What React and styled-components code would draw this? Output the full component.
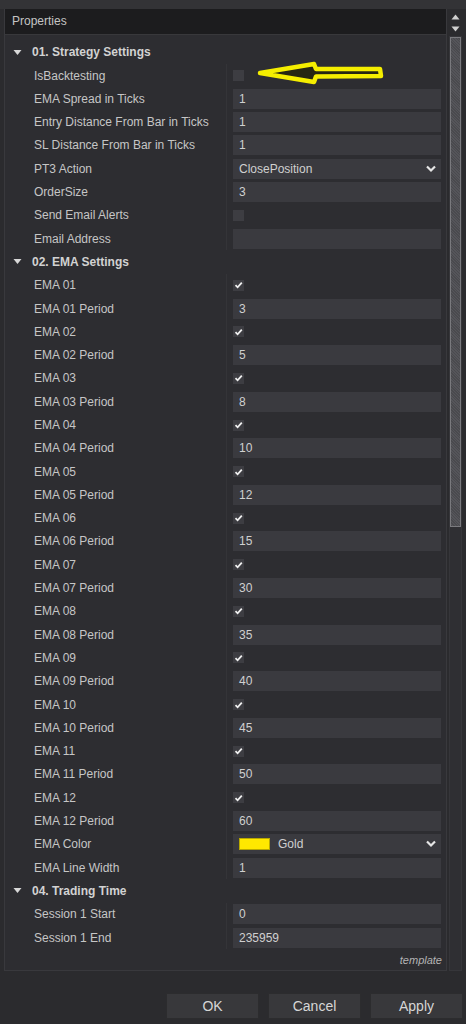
import React from "react";
import styled, { createGlobalStyle } from "styled-components";

const GlobalStyle = createGlobalStyle`
  html, body {
    margin: 0;
    padding: 0;
    background: #2b2b2e;
  }
  body {
    font-family: "Liberation Sans", Arial, sans-serif;
  }
`;

const strategy = [
  { label: "IsBacktesting", type: "check", checked: false },
  { label: "EMA Spread in Ticks", type: "text", value: "1" },
  { label: "Entry Distance From Bar in Ticks", type: "text", value: "1" },
  { label: "SL Distance From Bar in Ticks", type: "text", value: "1" },
  { label: "PT3 Action", type: "select", value: "ClosePosition" },
  { label: "OrderSize", type: "text", value: "3" },
  { label: "Send Email Alerts", type: "check", checked: false },
  { label: "Email Address", type: "text", value: "" },
];

const periods = [3, 5, 8, 10, 12, 15, 30, 35, 40, 45, 50, 60];
const ema = [];
periods.forEach((p, i) => {
  const n = String(i + 1).padStart(2, "0");
  ema.push({ label: `EMA ${n}`, type: "check", checked: true });
  ema.push({ label: `EMA ${n} Period`, type: "text", value: String(p) });
});
ema.push({ label: "EMA Color", type: "color", value: "Gold" });
ema.push({ label: "EMA Line Width", type: "text", value: "1" });

const trading = [
  { label: "Session 1 Start", type: "text", value: "0" },
  { label: "Session 1 End", type: "text", value: "235959" },
];

const sections = [
  { title: "01. Strategy Settings", rows: strategy },
  { title: "02. EMA Settings", rows: ema },
  { title: "04. Trading Time", rows: trading },
];

const Chevron = () => (
  <svg width="10" height="8" viewBox="0 0 10 8">
    <path d="M1 1.5 L5 5.5 L9 1.5" fill="none" stroke="#e6e6e6" strokeWidth="2.2" />
  </svg>
);

const Caret = () => (
  <svg width="9" height="7" viewBox="0 0 9 7">
    <path d="M0.5 1 L8.5 1 L4.5 6 Z" fill="#d8d8d8" />
  </svg>
);

const Value = ({ row }) => {
  if (row.type === "check") {
    return (
      <CheckBox>
        {row.checked && (
          <svg width="9" height="8" viewBox="0 0 9 8">
            <path d="M1.5 4.2 L3.6 6.3 L7.8 1.6" fill="none" stroke="#f0f0f0" strokeWidth="1.8" />
          </svg>
        )}
      </CheckBox>
    );
  }
  if (row.type === "select") {
    return (
      <Field>
        <span>{row.value}</span>
        <Chevron />
      </Field>
    );
  }
  if (row.type === "color") {
    return (
      <Field>
        <Swatch />
        <SwatchLabel>{row.value}</SwatchLabel>
        <Chevron />
      </Field>
    );
  }
  return (
    <Field>
      <span>{row.value}</span>
    </Field>
  );
};

export default function App() {
  return (
    <Window>
      <GlobalStyle />
      <TopStrip />
      <Main>
        <Panel>
          <Header>Properties</Header>
          <List>
            {sections.map((s) => (
              <React.Fragment key={s.title}>
                <SectionRow>
                  <Caret />
                  <SectionTitle>{s.title}</SectionTitle>
                </SectionRow>
                {s.rows.map((r) => (
                  <Row key={r.label}>
                    <Label>{r.label}</Label>
                    <Cell>
                      <Value row={r} />
                    </Cell>
                  </Row>
                ))}
              </React.Fragment>
            ))}
            <Annotation width="132" height="26" viewBox="0 0 132 26">
              <path
                d="M4 12 L58 3 L60 8 L124 8 L125 15 L60 15.5 L58 21 Z"
                fill="#262612"
                stroke="#f5ee00"
                strokeWidth="4.5"
                strokeLinejoin="round"
              />
            </Annotation>
          </List>
          <TemplateNote>template</TemplateNote>
        </Panel>
        <ScrollColumn>
          <ArrowBtn>
            <svg width="9" height="6" viewBox="0 0 9 6">
              <path d="M0.5 5.5 L4.5 0.5 L8.5 5.5 Z" fill="#d0d0d0" />
            </svg>
          </ArrowBtn>
          <ArrowBtn>
            <svg width="9" height="6" viewBox="0 0 9 6">
              <path d="M0.5 0.5 L8.5 0.5 L4.5 5.5 Z" fill="#d0d0d0" />
            </svg>
          </ArrowBtn>
          <Track>
            <Thumb />
          </Track>
        </ScrollColumn>
      </Main>
      <ButtonBar>
        <Button>OK</Button>
        <Button>Cancel</Button>
        <Button>Apply</Button>
      </ButtonBar>
    </Window>
  );
}

const Window = styled.div`
  width: 466px;
  height: 1024px;
  background: #2b2b2e;
  display: flex;
  flex-direction: column;
  overflow: hidden;
`;

const TopStrip = styled.div`
  height: 9px;
  background: #333336;
`;

const Main = styled.div`
  display: flex;
  padding-left: 4px;
  gap: 1px;
`;

const Panel = styled.div`
  width: 443px;
  height: 962px;
  border: 1px solid #39393d;
  border-top: none;
  background: #2d2d31;
  display: flex;
  flex-direction: column;
  box-sizing: border-box;
`;

const Header = styled.div`
  height: 26px;
  display: flex;
  align-items: center;
  padding-left: 7px;
  background: #1c1c1e;
  border-bottom: 1px solid #38383b;
  color: #c4c4c4;
  font-size: 12px;
`;

const List = styled.div`
  position: relative;
  padding-top: 6px;
  flex: 1;
`;

const SectionRow = styled.div`
  height: 23.3px;
  display: flex;
  align-items: center;
  gap: 10px;
  padding-left: 8px;
`;

const SectionTitle = styled.span`
  color: #d2d2d2;
  font-size: 12px;
  font-weight: bold;
`;

const Row = styled.div`
  height: 23.3px;
  display: grid;
  grid-template-columns: 221px 1fr;
  align-items: stretch;
`;

const Label = styled.div`
  display: flex;
  align-items: center;
  padding-left: 29px;
  color: #c6c6c6;
  font-size: 12px;
  white-space: nowrap;
`;

const Cell = styled.div`
  display: flex;
  align-items: center;
  padding: 0 5px 0 6px;
  border-left: 1px solid #343438;
`;

const Field = styled.div`
  flex: 1;
  height: 20px;
  display: flex;
  align-items: center;
  gap: 6px;
  padding: 0 5px 0 6px;
  background: #3a3a3f;
  color: #d0d0d0;
  font-size: 12px;

  & > span {
    flex: 1;
  }
`;

const CheckBox = styled.div`
  width: 11px;
  height: 11px;
  background: #3d3d42;
  display: flex;
  align-items: center;
  justify-content: center;
`;

const Swatch = styled.div`
  width: 29px;
  height: 10px;
  background: #ffe800;
  border: 1px solid #b8a800;
`;

const SwatchLabel = styled.span`
  padding-left: 2px;
`;

const Annotation = styled.svg`
  position: absolute;
  left: 251px;
  top: 26px;
`;

const TemplateNote = styled.div`
  height: 22px;
  display: flex;
  align-items: center;
  justify-content: flex-end;
  padding-right: 4px;
  color: #b4b4b4;
  font-size: 11px;
  font-style: italic;
`;

const ScrollColumn = styled.div`
  width: 15px;
  display: flex;
  flex-direction: column;
  align-items: center;
  padding-top: 2px;
  background: #2b2b2e;
`;

const ArrowBtn = styled.div`
  height: 12px;
  display: flex;
  align-items: center;
  justify-content: center;
`;

const Track = styled.div`
  width: 13px;
  height: 935px;
  margin-top: 1px;
  background: #2f2f33;
  border: 1px solid #36363a;
  box-sizing: border-box;
`;

const Thumb = styled.div`
  height: 490px;
  background: repeating-linear-gradient(45deg, #4a4a4e 0 1px, #55555a 1px 2px);
  border: 1px solid #7a7a7e;
  box-sizing: border-box;
`;

const ButtonBar = styled.div`
  display: flex;
  justify-content: flex-end;
  gap: 9px;
  padding: 22px 3px 0 0;
`;

const Button = styled.button`
  width: 93px;
  height: 26px;
  background: #38383b;
  border: 1px solid #2c2c2e;
  color: #d6d6d6;
  font-family: "Liberation Sans", Arial, sans-serif;
  font-size: 14px;
`;
